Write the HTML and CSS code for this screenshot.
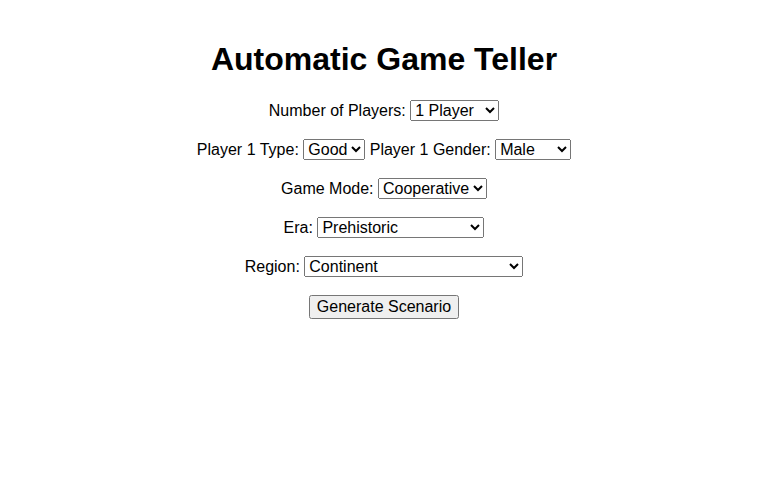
FILE: index.html
```html
<!DOCTYPE html>
<html lang="en">
<head>
  <meta charset="UTF-8" />
  <meta name="viewport" content="width=device-width, initial-scale=1.0" />
  <title>Automatic Game Teller</title>
  <link rel="stylesheet" href="styles.css">
</head>
<body>
  <div class="container">
    <h1>Automatic Game Teller</h1>

    <div class="form-row">
      <label for="players">Number of Players:</label>
      <select id="players">
        <option>1 Player</option>
        <option>2 Players</option>
      </select>
    </div>

    <div class="form-row">
      <label for="p1type">Player 1 Type:</label>
      <select id="p1type">
        <option>Good</option>
        <option>Evil</option>
      </select>
      <label for="p1gender">Player 1 Gender:</label>
      <select id="p1gender">
        <option>Male</option>
        <option>Female</option>
      </select>
    </div>

    <div class="form-row">
      <label for="mode">Game Mode:</label>
      <select id="mode">
        <option>Cooperative</option>
        <option>Competitive</option>
      </select>
    </div>

    <div class="form-row">
      <label for="era">Era:</label>
      <select id="era">
        <option>Prehistoric</option>
        <option>Ancient</option>
        <option>Medieval</option>
        <option>Renaissance</option>
        <option>Industrial Revolution</option>
        <option>Modern</option>
        <option>Future</option>
      </select>
    </div>

    <div class="form-row">
      <label for="region">Region:</label>
      <select id="region">
        <option>Continent</option>
        <option>Island</option>
        <option>Ocean</option>
        <option>Underground Civilization</option>
        <option>Space</option>
      </select>
    </div>

    <div class="form-row">
      <button id="generate">Generate Scenario</button>
    </div>

    <div id="scenario"></div>
  </div>
</body>
</html>
```

FILE: styles.css
```css
body {
  font-family: Arial, "Liberation Sans", sans-serif;
  text-align: center;
  margin: 0;
  padding: 20px;
}

h1 {
  font-size: 32px;
  margin: 21px 0 22px;
}

.form-row {
  margin-bottom: 18px;
}

label {
  font-size: 16px;
}

select,
button {
  font-family: inherit;
  font-size: 16px;
}

#region {
  width: 219px;
}
```
